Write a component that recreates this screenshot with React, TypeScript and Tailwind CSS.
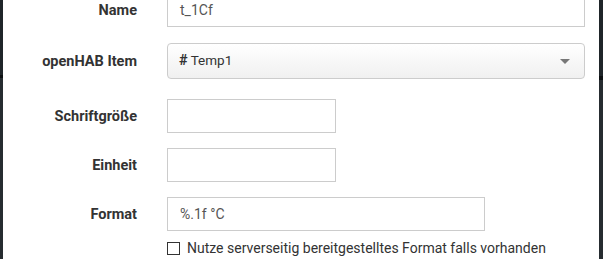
export default function App() {
  const font = { fontFamily: 'Roboto, "Liberation Sans", sans-serif' }

  return (
    <div className="flex w-[603px] h-[259px] overflow-hidden bg-white text-[#333]" style={font}>
      {/* left edge of the window behind */}
      <div className="flex w-[3px] flex-col shrink-0">
        <div className="h-[75px] bg-[#1f2529]" />
        <div className="h-[3px] bg-[#0d1012]" />
        <div className="flex-1 bg-[#262c30]" />
      </div>

      <div className="relative flex-1">
        {/* Name */}
        <div className="flex items-center -mt-[7px]">
          <label className="w-[134px] pt-[1px] text-right text-[14.5px] font-bold">Name</label>
          <div className="ml-[30px] flex h-[34px] w-[418px] items-center border border-[#ccc] px-[12px] text-[14px] text-[#555]">
            t_1Cf
          </div>
        </div>

        {/* openHAB Item */}
        <div className="mt-[16px] flex items-center">
          <label className="w-[134px] pt-[1px] text-right text-[14.5px] font-bold">openHAB Item</label>
          <div className="ml-[30px] flex h-[36px] w-[418px] items-center justify-between rounded-[4px] border border-[#ccc] bg-gradient-to-b from-white to-[#f0f0f0] pl-[11px] pr-[14px] text-[13.5px] text-[#333]">
            <span>
              <span className="text-[14.5px] font-bold">#</span> Temp1
            </span>
            <span className="h-0 w-0 border-x-[5px] border-t-[5px] border-x-transparent border-t-[#777]" />
          </div>
        </div>

        {/* Schriftgröße */}
        <div className="mt-[20px] flex items-center">
          <label className="w-[134px] pt-[1px] text-right text-[14.5px] font-bold">Schriftgröße</label>
          <div className="ml-[30px] h-[34px] w-[169px] border border-[#ccc]" />
        </div>

        {/* Einheit */}
        <div className="mt-[15px] flex items-center">
          <label className="w-[134px] pt-[1px] text-right text-[14.5px] font-bold">Einheit</label>
          <div className="ml-[30px] h-[34px] w-[169px] border border-[#ccc]" />
        </div>

        {/* Format */}
        <div className="mt-[15px] flex items-center">
          <label className="w-[134px] pt-[1px] text-right text-[14.5px] font-bold">Format</label>
          <div className="ml-[30px] flex h-[34px] w-[318px] items-center border border-[#ccc] px-[12px] text-[14px] text-[#555]">
            %.1f °C
          </div>
        </div>

        <div className="mt-[7px] ml-[164px] flex items-center gap-[7px] text-[14px] text-[#333]">
          <span className="h-[13px] w-[13px] border border-[#333] bg-white" />
          <span>Nutze serverseitig bereitgestelltes Format falls vorhanden</span>
        </div>
      </div>

      {/* right edge */}
      <div className="flex w-[4px] flex-col shrink-0">
        <div className="h-[76px] bg-[#1f2529]" />
        <div className="h-[4px] bg-[#0d1012]" />
        <div className="flex-1 bg-[#262c30]" />
      </div>
    </div>
  )
}
